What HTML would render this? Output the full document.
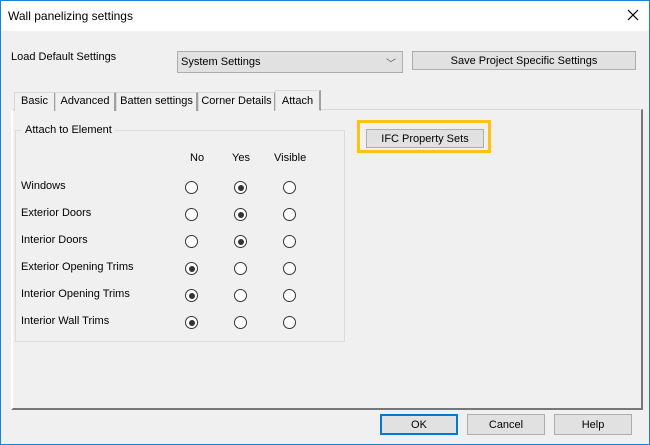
<!DOCTYPE html><html><head><style>
body{margin:0;width:650px;height:445px;overflow:hidden;font-family:"Liberation Sans",sans-serif;font-size:11px;color:#000}
.win{position:absolute;left:0;top:0;width:648px;height:443px;border:1px solid #1883d7;background:#f0f0f0}
.title{position:absolute;left:0;top:0;width:648px;height:30px;background:#fff}
.abs{position:absolute;white-space:nowrap}
.btn{position:absolute;background:#e1e1e1;border:1px solid #adadad;box-sizing:border-box;text-align:center}
.tab{position:absolute;top:91px;height:19px;border:1px solid #d9d9d9;border-right:2px solid #a0a0a0;border-bottom:none;background:#f0f0f0;box-sizing:border-box;padding-top:2px;text-align:center}
.r{position:absolute;width:13px;height:13px;border:1px solid #333;border-radius:50%;background:#fff;box-sizing:border-box}
.r.on::after{content:"";position:absolute;left:2.5px;top:2.5px;width:6px;height:6px;border-radius:50%;background:#333}
</style></head><body><div class="win">
<div class="title"></div>
<div class="abs" style="left:7px;top:8px;font-size:12px">Wall panelizing settings</div>
<svg style="position:absolute;left:626px;top:8px" width="12" height="12"><path d="M1 1L11 11M11 1L1 11" stroke="#000" stroke-width="1.2"/></svg>
<div class="abs" style="left:10px;top:50px">Load Default Settings</div>
<div class="btn" style="left:176px;top:50px;width:226px;height:22px;text-align:left;padding:4px 0 0 3px">System Settings<span style="position:absolute;right:6px;top:3px;font-size:10px;color:#555">﹀</span></div>
<div class="btn" style="left:411px;top:50px;width:224px;height:19px;padding-top:3px">Save Project Specific Settings</div>
<div style="position:absolute;left:10px;top:108px;width:628px;height:298px;border-top:1px solid #d9d9d9;border-left:2px solid #fff;border-right:2px solid #777;border-bottom:2px solid #777"></div>
<div class="tab" style="left:13px;width:42px">Basic</div>
<div class="tab" style="left:54px;width:61px">Advanced</div>
<div class="tab" style="left:115px;width:82px">Batten settings</div>
<div class="tab" style="left:197px;width:78px">Corner Details</div>
<div class="tab" style="left:274px;width:46px;top:89px;height:21px;border-bottom:1px solid #f0f0f0;padding-top:4px">Attach</div>
<div style="position:absolute;left:14px;top:129px;width:328px;height:210px;border:1px solid #dcdcdc"></div>
<div class="abs" style="left:21px;top:123px;background:#f0f0f0;padding:0 3px">Attach to Element</div>
<div class="abs" style="left:189px;top:151px">No</div>
<div class="abs" style="left:231px;top:151px">Yes</div>
<div class="abs" style="left:273px;top:151px">Visible</div>
<div class="abs" style="left:20px;top:179px">Windows</div>
<div class="abs" style="left:20px;top:206px">Exterior Doors</div>
<div class="abs" style="left:20px;top:233px">Interior Doors</div>
<div class="abs" style="left:20px;top:260px">Exterior Opening Trims</div>
<div class="abs" style="left:20px;top:287px">Interior Opening Trims</div>
<div class="abs" style="left:20px;top:314px">Interior Wall Trims</div>
<div class="r" style="left:184px;top:180px"></div><div class="r on" style="left:233px;top:180px"></div><div class="r" style="left:282px;top:180px"></div>
<div class="r" style="left:184px;top:207px"></div><div class="r on" style="left:233px;top:207px"></div><div class="r" style="left:282px;top:207px"></div>
<div class="r" style="left:184px;top:234px"></div><div class="r on" style="left:233px;top:234px"></div><div class="r" style="left:282px;top:234px"></div>
<div class="r on" style="left:184px;top:261px"></div><div class="r" style="left:233px;top:261px"></div><div class="r" style="left:282px;top:261px"></div>
<div class="r on" style="left:184px;top:288px"></div><div class="r" style="left:233px;top:288px"></div><div class="r" style="left:282px;top:288px"></div>
<div class="r on" style="left:184px;top:315px"></div><div class="r" style="left:233px;top:315px"></div><div class="r" style="left:282px;top:315px"></div>
<div style="position:absolute;left:356px;top:119px;width:134px;height:33px;border:3px solid #fbc312;box-sizing:border-box"></div>
<div class="btn" style="left:365px;top:128px;width:118px;height:19px;padding-top:3px">IFC Property Sets</div>
<div class="btn" style="left:379px;top:413px;width:78px;height:21px;border:2px solid #0078d7;padding-top:3px">OK</div>
<div class="btn" style="left:466px;top:413px;width:78px;height:21px;padding-top:4px">Cancel</div>
<div class="btn" style="left:553px;top:413px;width:78px;height:21px;padding-top:4px">Help</div>
</div></body></html>
